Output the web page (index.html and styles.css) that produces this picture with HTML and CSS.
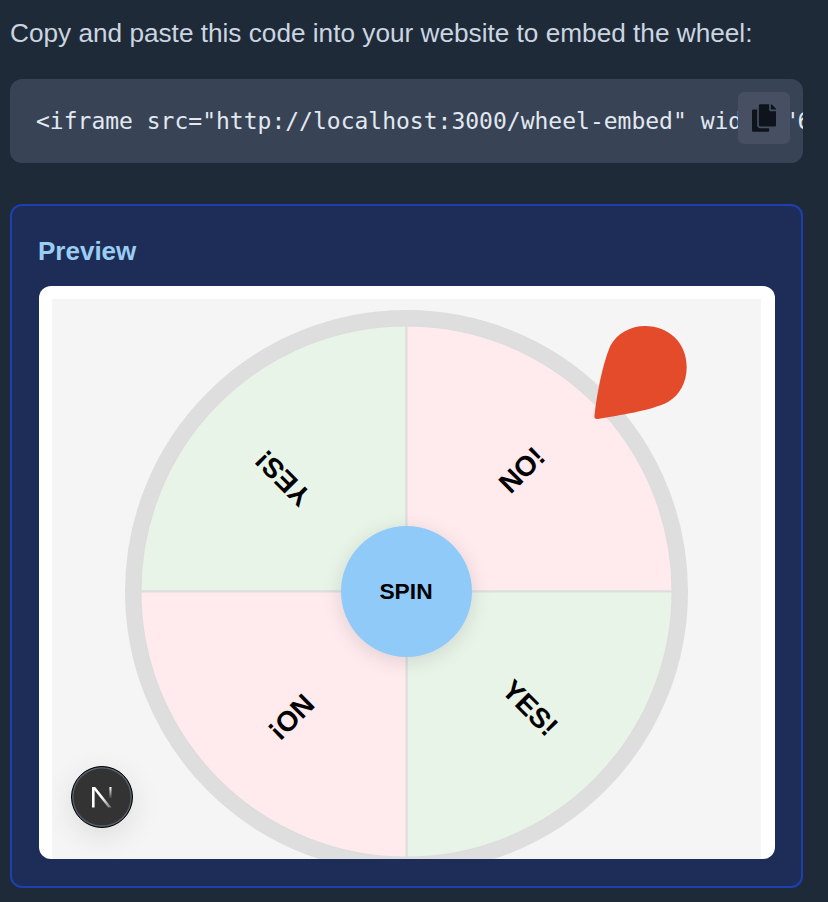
FILE: index.html
```html
<!DOCTYPE html>
<html lang="en">
<head>
<meta charset="utf-8">
<title>Embed the wheel</title>
<link rel="stylesheet" href="styles.css">
</head>
<body>
<main class="page">
  <p class="intro">Copy and paste this code into your website to embed the wheel:</p>
  <div class="code-box">
    <code class="code">&lt;iframe src="http://localhost:3000/wheel-embed" width="600" height="600"&gt;&lt;/iframe&gt;</code>
    <button class="copy" type="button" aria-label="Copy">
      <svg class="copy-icon" viewBox="0 0 448 512"><path d="M320 448v40c0 13.255-10.745 24-24 24H24c-13.255 0-24-10.745-24-24V120c0-13.255 10.745-24 24-24h72v296c0 30.879 25.121 56 56 56h168zm0-344V0H152c-13.255 0-24 10.745-24 24v368c0 13.255 10.745 24 24 24h272c13.255 0 24-10.745 24-24V128H344c-13.2 0-24-10.8-24-24zm120.971-31.029L375.029 7.029A24 24 0 0 0 358.059 0H352v96h96v-6.059a24 24 0 0 0-7.029-16.97z"/></svg>
    </button>
  </div>
  <section class="preview">
    <h2 class="preview-title">Preview</h2>
    <div class="frame">
      <div class="stage">
        <div class="wheel">
          <svg class="wheel-svg" viewBox="0 0 563 563">
            <circle class="rim" cx="281.5" cy="281.5" r="274"/>
            <path class="green" d="M281.5 281.5V15.5A266 266 0 0 0 15.5 281.5Z"/>
            <path class="pink" d="M281.5 281.5V15.5A266 266 0 0 1 547.5 281.5Z"/>
            <path class="green" d="M281.5 281.5H547.5A266 266 0 0 1 281.5 547.5Z"/>
            <path class="pink" d="M281.5 281.5V547.5A266 266 0 0 1 15.5 281.5Z"/>
            <text class="label" transform="translate(397 160) rotate(-45)">NO!</text>
            <text class="label" transform="translate(405 398) rotate(45)">YES!</text>
            <text class="label" transform="translate(166 407) rotate(135)">NO!</text>
            <text class="label" transform="translate(158 168) rotate(225)">YES!</text>
          </svg>
          <button class="spin" type="button">SPIN</button>
        </div>
        <svg class="pointer" viewBox="0 0 100 102"><path d="M4.5 95C7 74 12 46 20 26.5 27 13 41 6 55 6 79 6 96.7 23 96.7 47 96.7 62 90 75 78 82 60 91 30 95 8 99 5 99.5 4 98 4.5 95Z"/></svg>
        <div class="next-badge">
          <svg class="next-logo" viewBox="0 0 24 24">
            <defs>
              <linearGradient id="diag" x1="0" y1="0" x2="1" y2="1"><stop offset="0.5" stop-color="#fff"/><stop offset="1" stop-color="#fff" stop-opacity="0.3"/></linearGradient>
              <linearGradient id="right" x1="0" y1="0" x2="0" y2="1"><stop offset="0" stop-color="#fff"/><stop offset="1" stop-color="#fff" stop-opacity="0.1"/></linearGradient>
            </defs>
            <rect x="2" y="2" width="2.6" height="20.5" fill="#fff"/>
            <path d="M2 2H5.2L21.5 22.5H18.2Z" fill="url(#diag)"/>
            <rect x="19.4" y="2" width="2.1" height="11" fill="url(#right)"/>
          </svg>
        </div>
      </div>
    </div>
  </section>
</main>
</body>
</html>
```

FILE: styles.css
```css
* { box-sizing: border-box; }

html, body {
  margin: 0;
  background: #1e2a38;
}

.page {
  padding: 0 25px 14px 10px;
  font-family: "Liberation Sans", Arial, sans-serif;
}

.intro {
  margin: 0;
  padding-top: 15px;
  height: 79px;
  font-size: 26.2px;
  line-height: 36px;
  color: #cbd5e0;
}

.code-box {
  position: relative;
  height: 84px;
  padding: 0 26px;
  display: flex;
  align-items: center;
  overflow: hidden;
  background: #384356;
  border-radius: 12px;
}

.code {
  font-family: "DejaVu Sans Mono", monospace;
  font-size: 23px;
  white-space: nowrap;
  color: #e2e8f0;
}

.copy {
  position: absolute;
  top: 13px;
  right: 13px;
  width: 52px;
  height: 52px;
  padding: 0;
  border: 0;
  border-radius: 6px;
  background: #465062;
  display: flex;
  align-items: center;
  justify-content: center;
}

.copy-icon {
  width: 24px;
  height: 28px;
  fill: #0f131c;
}

.preview {
  margin-top: 41px;
  height: 684px;
  padding: 27px 26px 27px 27px;
  background: #1e2d57;
  border: 2px solid #1e40af;
  border-radius: 12px;
}

.preview-title {
  margin: 0 0 0 -1px;
  height: 53px;
  font-size: 26px;
  line-height: 36px;
  font-weight: 700;
  color: #9bcdf3;
}

.frame {
  height: 573px;
  padding: 13px 14px 0 13px;
  background: #fff;
  border-radius: 12px;
  overflow: hidden;
}

.stage {
  position: relative;
  height: 560px;
  padding-top: 11px;
  display: flex;
  justify-content: center;
  overflow: hidden;
  background: #f5f5f5;
}

.wheel {
  position: relative;
  flex: none;
  width: 563px;
  height: 563px;
}

.wheel-svg {
  display: block;
  width: 563px;
  height: 563px;
}

.rim {
  fill: none;
  stroke: #dedede;
  stroke-width: 15;
}

.green, .pink {
  stroke: #dddddd;
  stroke-width: 2;
}

.green { fill: #e9f4e9; }
.pink { fill: #ffebee; }

.label {
  font-family: "Liberation Sans", Arial, sans-serif;
  font-size: 28px;
  font-weight: 700;
  fill: #000;
  text-anchor: middle;
  dominant-baseline: central;
}

.spin {
  position: absolute;
  top: 216px;
  left: 215.5px;
  width: 131px;
  height: 131px;
  padding: 0;
  border: 0;
  border-radius: 50%;
  background: #90caf9;
  box-shadow: 0 4px 20px rgba(0, 0, 0, 0.12);
  font-family: "Liberation Sans", Arial, sans-serif;
  font-size: 22.8px;
  font-weight: 700;
  color: #000;
}

.pointer {
  position: absolute;
  left: 538px;
  top: 21px;
  width: 100px;
  height: 102px;
  fill: #e44b2b;
}

.next-badge {
  position: absolute;
  left: 19px;
  top: 467px;
  width: 62px;
  height: 62px;
  border-radius: 50%;
  background: #333;
  border: 1px solid #000;
  box-shadow: inset 0 0 0 1.5px #56606e, 0 8px 30px rgba(0, 0, 0, 0.1);
  display: flex;
  align-items: center;
  justify-content: center;
}

.next-logo {
  width: 24px;
  height: 24px;
}
```
